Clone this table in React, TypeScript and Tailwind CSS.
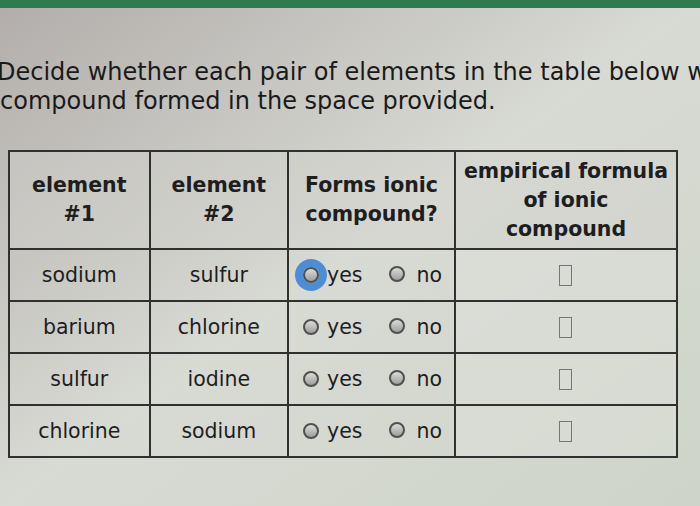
const ROWS = [
  ["sodium", "sulfur"],
  ["barium", "chlorine"],
  ["sulfur", "iodine"],
  ["chlorine", "sodium"],
];

function Radio({ focused }: { focused?: boolean }) {
  return (
    <span
      className={
        "inline-block w-[16px] h-[16px] rounded-full border-2 border-[#505050] bg-linear-to-b from-[#dcdcda] to-[#9e9e9c] shrink-0" +
        (focused ? " ring-8 ring-[#4c8ed6]" : "")
      }
    />
  );
}

export default function App() {
  return (
    <div
      className="w-[700px] h-[506px] overflow-hidden bg-linear-to-br from-[#b2adaa] via-[#d8dad4] to-[#ced5c8] text-[#1e1e1e]"
      style={{ fontFamily: '"DejaVu Sans", Verdana, sans-serif' }}
    >
      <div className="h-2 bg-[#2f7a4e]" />

      <div className="mt-[50px] ml-[-3px] text-[24px] leading-[29px] whitespace-nowrap text-[#1a1a1a]">
        <div>Decide whether each pair of elements in the table below w</div>
        <div className="ml-[3px]">compound formed in the space provided.</div>
      </div>

      <table className="mt-[34px] ml-[8px] w-[670px] border-collapse border-2 border-[#303030] text-[20.5px] text-center">
        <colgroup>
          <col className="w-[141px]" />
          <col className="w-[139px]" />
          <col className="w-[167px]" />
          <col className="w-[223px]" />
        </colgroup>
        <thead>
          <tr className="h-[98px] font-bold leading-[29px] bg-[#d3d3ce]/40">
            <th className="border-2 border-[#303030]">element<br />#1</th>
            <th className="border-2 border-[#303030]">element<br />#2</th>
            <th className="border-2 border-[#303030]">Forms ionic<br />compound?</th>
            <th className="border-2 border-[#303030]">empirical formula<br />of ionic<br />compound</th>
          </tr>
        </thead>
        <tbody>
          {ROWS.map(([a, b], i) => (
            <tr key={i} className="h-[52px]">
              <td className="border-2 border-[#303030]">{a}</td>
              <td className="border-2 border-[#303030]">{b}</td>
              <td className="border-2 border-[#303030] pl-[14px]">
                <div className="flex items-center">
                  <Radio focused={i === 0} />
                  <span className="ml-[8px]">yes</span>
                  <span className="ml-[26px]"><Radio /></span>
                  <span className="ml-[12px]">no</span>
                </div>
              </td>
              <td className="border-2 border-[#303030] bg-[#e2e4de]/40">
                <span className="inline-block align-middle w-[13px] h-[21px] border-[1.5px] border-[#767676]" />
              </td>
            </tr>
          ))}
        </tbody>
      </table>
    </div>
  );
}
